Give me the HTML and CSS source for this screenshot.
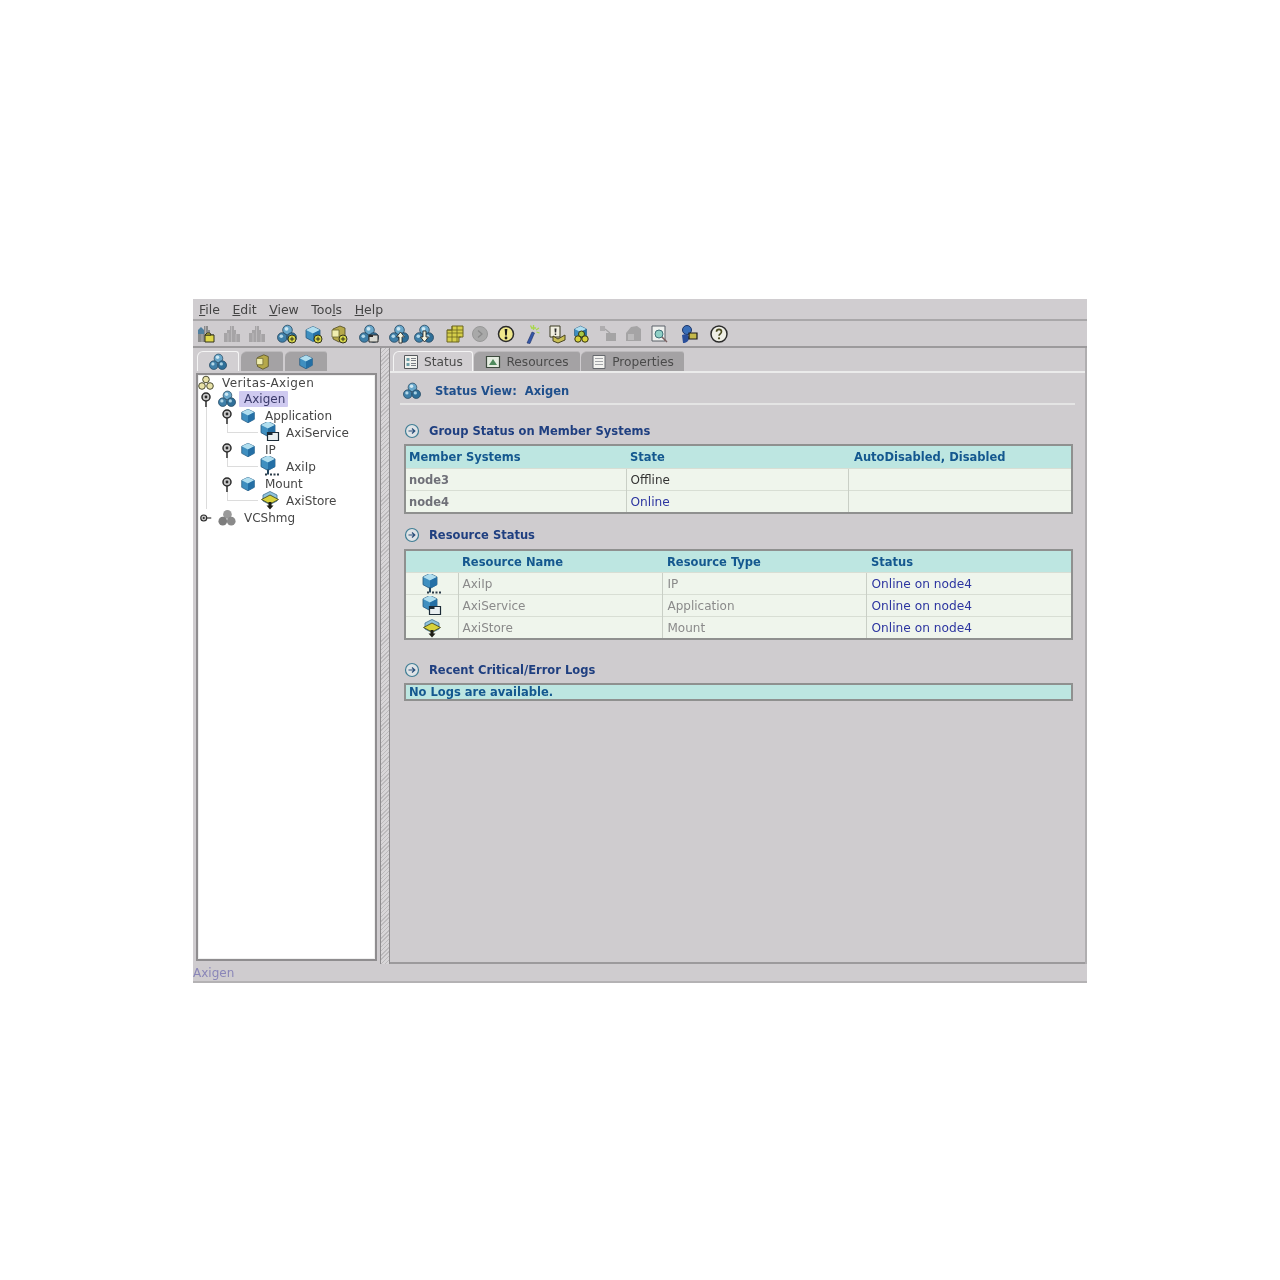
FILE: index.html
```html
<!DOCTYPE html>
<html lang="en">
<head>
  <meta charset="UTF-8" />
  <title>Veritas Cluster Manager</title>
  <link rel="stylesheet" href="styles.css">
</head>
<body>
  <svg class="defs" width="0" height="0">
    <defs>
      <symbol id="cube" viewBox="0 0 20 20">
        <path d="M10 2.500l7 3.400v7.800L10 17.500l-7-3.800V5.900z" fill="#3f8fc0" stroke="#24587f" stroke-width=".8"/>
        <path d="M10 2.500l7 3.400L10 9.500 3 5.900z" fill="#b0deef"/>
        <path d="M10 9.500v8l7-3.800V5.900z" fill="#246fa5"/>
      </symbol>
      <symbol id="cluster" viewBox="0 0 20 20">
        <g stroke="#24465f" stroke-width=".8">
          <circle cx="10.500" cy="6" r="4.800" fill="#6aa8cb"/>
          <circle cx="5.300" cy="13.500" r="4.800" fill="#3f7fa8"/>
          <circle cx="14.700" cy="13.500" r="4.800" fill="#2f6f98"/>
        </g>
        <circle cx="9.500" cy="4.800" r="1.900" fill="#cfe8f3"/>
        <circle cx="4.300" cy="12.200" r="1.800" fill="#b4d8e8"/>
        <circle cx="13.700" cy="12.200" r="1.800" fill="#a8d0e2"/>
      </symbol>
      <symbol id="cluster-off" viewBox="0 0 20 20">
        <circle cx="10.500" cy="6" r="4.800" fill="#9a9a9a"/>
        <circle cx="5.300" cy="13.500" r="4.800" fill="#7d7d7d"/>
        <circle cx="14.700" cy="13.500" r="4.800" fill="#8a8a8a"/>
      </symbol>
      <symbol id="towers" viewBox="0 0 20 20">
        <path d="M8 2h4v4h2v4h4v8H2V9h3V6h3z" fill="#8b8b8b"/>
        <path d="M9.500 2v16M6 9v9M14 10v8" stroke="#b5b3b5" stroke-width=".9"/>
      </symbol>
      <symbol id="res-ip" viewBox="0 0 20 20">
        <use href="#cube" x="-2" y="-3" width="20" height="20"/>
        <path d="M7 13.500h2v5H7z" fill="#24465f"/>
        <path d="M5 17.500h2v2H5zM10 17.500h2v2h-2zM13.500 17.500h2v2h-2zM17 17.500h2v2h-2z" fill="#2b3b48"/>
      </symbol>
      <symbol id="res-app" viewBox="0 0 20 20">
        <use href="#cube" x="-2" y="-3" width="20" height="20"/>
        <path d="M7.500 10.500h11v8h-11z" fill="#e8eef0" stroke="#1b2a36" stroke-width="1.200"/>
        <path d="M7.500 10.500h5v2.500h-5z" fill="#1b2a36"/>
      </symbol>
      <symbol id="res-mount" viewBox="0 0 20 20">
        <path d="M10 1.500l7 3.500v6l-7 3.500-7-3.500V5z" fill="#8fc3dc" stroke="#3f7092" stroke-width=".8"/>
        <path d="M1.500 9.500L10 5l8.500 4.500L10 14z" fill="#d8d23c" stroke="#3c3c10" stroke-width=".8"/>
        <path d="M8.500 12h3v3.500h2L10 19.500l-3.500-4h2z" fill="#1c1c14"/>
      </symbol>
      <symbol id="handle" viewBox="0 0 12 16">
        <circle cx="6" cy="5" r="4" fill="#c8c8c8" stroke="#2a2a2a" stroke-width="1.500"/>
        <circle cx="6" cy="5" r="1.400" fill="#2a2a2a"/>
        <path d="M6 9v6" stroke="#2a2a2a" stroke-width="1.500"/>
      </symbol>
      <symbol id="handle-side" viewBox="0 0 16 12">
        <circle cx="5" cy="6" r="4" fill="#c8c8c8" stroke="#2a2a2a" stroke-width="1.500"/>
        <circle cx="5" cy="6" r="1.400" fill="#2a2a2a"/>
        <path d="M9 6h6" stroke="#2a2a2a" stroke-width="1.500"/>
      </symbol>
      <symbol id="go" viewBox="0 0 16 16">
        <circle cx="8" cy="8" r="6.500" fill="#dfe3e6" stroke="#3f7d95" stroke-width="1.200"/>
        <path d="M4.500 8h6M8 5.500L10.800 8 8 10.500" fill="none" stroke="#2a4f7a" stroke-width="1.200"/>
      </symbol>
      <symbol id="plus-badge" viewBox="0 0 20 20">
        <circle cx="15" cy="15" r="4" fill="#d8d84a" stroke="#33331a"/>
        <path d="M12.800 15h4.400M15 12.800v4.400" stroke="#33331a"/>
      </symbol>
      <symbol id="doc-icon" viewBox="0 0 16 16">
        <path d="M1.500 1.500h13v13h-13z" fill="#f2f2ee" stroke="#55585c"/>
        <path d="M3.500 4h3v3h-3zM3.500 9h3v3h-3z" fill="#6f9fa8"/>
        <path d="M8 4.500h5M8 6.500h5M8 9.500h5M8 11.500h5" stroke="#7b7f85"/>
      </symbol>
      <symbol id="node-yellow" viewBox="0 0 20 20">
        <path d="M5 5l7-3 5 2v11l-6 3-6-3z" fill="#b5a84a" stroke="#4c4720" stroke-width=".8"/>
        <path d="M4 6h7v7H4z" fill="#f0eeb0" stroke="#6a6430" stroke-width=".8"/>
      </symbol>
    </defs>
  </svg>

  <div class="app">
    <nav class="menubar">
      <span class="menu"><u>F</u>ile</span>
      <span class="menu"><u>E</u>dit</span>
      <span class="menu"><u>V</u>iew</span>
      <span class="menu">Too<u>l</u>s</span>
      <span class="menu"><u>H</u>elp</span>
    </nav>

    <div class="toolbar">
      <span class="tool"><svg class="ico" viewBox="0 0 20 20"><use href="#towers" width="20" height="20"/><path d="M2 6l3-3 3 3v4H2z" fill="#4f7f9f"/><path d="M9 11h9v7H9z" fill="#e0d84a" stroke="#33331a"/><path d="M9 11l2-2h3l1 2z" fill="#e0d84a" stroke="#33331a"/></svg></span>
      <span class="tool"><svg class="ico faded"><use href="#towers"/></svg></span>
      <span class="tool"><svg class="ico faded"><use href="#towers"/></svg></span>
      <span class="tool sep"><svg class="ico"><use href="#cluster"/><use href="#plus-badge"/></svg></span>
      <span class="tool"><svg class="ico"><use href="#cube"/><use href="#plus-badge"/></svg></span>
      <span class="tool"><svg class="ico"><use href="#node-yellow"/><use href="#plus-badge"/></svg></span>
      <span class="tool sep"><svg class="ico" viewBox="0 0 20 20"><use href="#cluster" width="20" height="20"/><path d="M10 11h9v7h-9z" fill="#d9d9d2" stroke="#2b2b2b"/><path d="M10 11h4v2h-4z" fill="#2b2b2b"/></svg></span>
      <span class="tool sep"><svg class="ico" viewBox="0 0 20 20"><use href="#cluster" width="20" height="20"/><path d="M10 19v-6H7.500l4-5 4 5H13v6z" fill="#f4f4e0" stroke="#1b1b1b" stroke-width=".8"/></svg></span>
      <span class="tool"><svg class="ico" viewBox="0 0 20 20"><use href="#cluster" width="20" height="20"/><path d="M9 7v6H6.500l4 5 4-5H12V7z" fill="#f4f4e0" stroke="#1b1b1b" stroke-width=".8"/></svg></span>
      <span class="tool sep"><svg class="ico" viewBox="0 0 20 20"><path d="M2 6h5V2h11v11h-4v5H2z" fill="#d6cf4a" stroke="#6b6520"/><path d="M7 2v16M12 2v16M2 9h16M2 13h14M2 6h16" stroke="#6b6520" stroke-width=".8"/></svg></span>
      <span class="tool"><svg class="ico" viewBox="0 0 20 20"><circle cx="10" cy="10" r="7.500" fill="#a9a9a9" stroke="#989898"/><path d="M8 6.500l4 3.500-4 3.500" fill="none" stroke="#8a8a8a" stroke-width="1.300"/></svg></span>
      <span class="tool"><svg class="ico" viewBox="0 0 20 20"><circle cx="10" cy="10" r="7.500" fill="#f0e88c" stroke="#2a2a2a" stroke-width="1.500"/><path d="M8.700 5h2.600l-.5 6.500H9.200z" fill="#1a1a1a"/><circle cx="10" cy="14" r="1.400" fill="#1a1a1a"/></svg></span>
      <span class="tool"><svg class="ico" viewBox="0 0 20 20"><path d="M6 19l5-11 2.500 1L9 19.500z" fill="#3558a8" stroke="#1f2f66" stroke-width=".6"/><path d="M12.500 1v5M10 4h5M15 6l3-2M15.500 8l3 1M9.500 1.500l1.500 3" stroke="#a8d84a" stroke-width="1.300"/></svg></span>
      <span class="tool"><svg class="ico" viewBox="0 0 20 20"><path d="M3 2h10v11H3z" fill="#f0eee0" stroke="#3b3b22"/><path d="M7.500 4.500h2l-.3 4H7.800zM7.800 9.500h1.400v1.400H7.800z" fill="#2a2a2a"/><path d="M6 12l5 3 7-4v5l-7 3-5-2z" fill="#c9bf55" stroke="#4a4520"/></svg></span>
      <span class="tool"><svg class="ico" viewBox="0 0 20 20"><use href="#cube" width="17" height="17"/><circle cx="6" cy="15" r="3.200" fill="#d8d23c" stroke="#34340f"/><circle cx="13" cy="15" r="3.200" fill="#d8d23c" stroke="#34340f"/><circle cx="9.500" cy="10" r="3" fill="#a8c844" stroke="#34340f"/></svg></span>
      <span class="tool"><svg class="ico faded" viewBox="0 0 20 20"><path d="M2 2h5v5H2z" fill="#9a9a9a"/><path d="M8 9h10v8H8z" fill="#8a8a8a"/><path d="M7 5l5 4" stroke="#8a8a8a" stroke-width="1.500"/></svg></span>
      <span class="tool"><svg class="ico faded" viewBox="0 0 20 20"><path d="M8 3l6-1 4 3v12H3V9z" fill="#8a8a8a"/><path d="M5 10h6v6H5z" fill="#b0b0b0"/></svg></span>
      <span class="tool"><svg class="ico" viewBox="0 0 20 20"><path d="M3 2h13v15H3z" fill="#eef0ee" stroke="#5a6068"/><circle cx="10" cy="10" r="4" fill="#8fd0c6" stroke="#3f7078"/><path d="M13 13l5 5" stroke="#7a5f5f" stroke-width="1.500"/></svg></span>
      <span class="tool sep"><svg class="ico" viewBox="0 0 20 20"><circle cx="8" cy="6" r="4.500" fill="#3a6fb8" stroke="#1c3468"/><path d="M3 11c4-2 7 0 7 3s-3 5-6 5z" fill="#2a4f9a"/><path d="M10 9h8v6h-8z" fill="#c4b84a" stroke="#1a1a1a" stroke-width="1.200"/></svg></span>
      <span class="tool sep"><svg class="ico" viewBox="0 0 20 20"><circle cx="10" cy="10" r="8" fill="#efefe6" stroke="#2b2b2b" stroke-width="1.500"/><path d="M7.500 7.800c0-3.200 5-3.200 5 0 0 2-2.500 2-2.500 4" fill="none" stroke="#4a4a1e" stroke-width="1.600"/><circle cx="10" cy="14.300" r="1.100" fill="#4a4a1e"/></svg></span>
    </div>

    <div class="main">
      <aside class="side">
        <div class="tabs side-tabs">
          <span class="tab tab-on tab-side"><svg class="ico-sm"><use href="#cluster"/></svg></span>
          <span class="tab tab-side"><svg class="ico-sm"><use href="#node-yellow"/></svg></span>
          <span class="tab tab-side"><svg class="ico-sm"><use href="#cube"/></svg></span>
        </div>
        <div class="tree">
          <div class="row"><svg class="root-ico" viewBox="0 0 16 16"><g fill="#e8e2a8" stroke="#4a4a30"><circle cx="8" cy="4.500" r="3.300"/><circle cx="4" cy="11" r="3.300"/><circle cx="12" cy="11" r="3.300"/></g></svg><span class="label root-label">Veritas-Axigen</span></div>
          <div class="row"><svg class="handle"><use href="#handle"/></svg><svg class="ico-sm group-ico"><use href="#cluster"/></svg><span class="label label-sel">Axigen</span></div>
          <div class="row lvl2"><svg class="handle"><use href="#handle"/></svg><svg class="ico-sm group-ico"><use href="#cube"/></svg><span class="label">Application</span></div>
          <div class="row lvl3 branch"><svg class="ico-res"><use href="#res-app"/></svg><span class="label">AxiService</span></div>
          <div class="row lvl2"><svg class="handle"><use href="#handle"/></svg><svg class="ico-sm group-ico"><use href="#cube"/></svg><span class="label">IP</span></div>
          <div class="row lvl3 branch"><svg class="ico-res"><use href="#res-ip"/></svg><span class="label">AxiIp</span></div>
          <div class="row lvl2"><svg class="handle"><use href="#handle"/></svg><svg class="ico-sm group-ico"><use href="#cube"/></svg><span class="label">Mount</span></div>
          <div class="row lvl3 branch"><svg class="ico-res"><use href="#res-mount"/></svg><span class="label">AxiStore</span></div>
          <div class="row"><svg class="handle handle-side"><use href="#handle-side"/></svg><svg class="ico-sm group-ico"><use href="#cluster-off"/></svg><span class="label">VCShmg</span></div>
        </div>
      </aside>

      <div class="splitter"></div>

      <section class="content">
        <div class="tabs">
          <span class="tab tab-on tab-main"><svg class="ico-tab"><use href="#doc-icon"/></svg>Status</span>
          <span class="tab tab-main tab-res"><svg class="ico-tab" viewBox="0 0 16 16"><path d="M1.500 2.500h13v11h-13z" fill="#e4ece0" stroke="#3d4a3d" stroke-width="1.200"/><path d="M4 11l4-6 4 6z" fill="#4e8a5c"/></svg>Resources</span>
          <span class="tab tab-main"><svg class="ico-tab" viewBox="0 0 16 16"><path d="M2 1.500h12v13H2z" fill="#f3f3f0" stroke="#66696e"/><path d="M4 4.500h8M4 7.500h8M4 10.500h8" stroke="#a2a4a8"/></svg>Properties</span>
        </div>
        <div class="panel">
          <h1 class="view-title"><svg class="ico-sm"><use href="#cluster"/></svg><span>Status View:&nbsp; Axigen</span></h1>

          <h2 class="sec sec-first"><svg class="ico-go"><use href="#go"/></svg>Group Status on Member Systems</h2>
          <table class="grid grid-members">
            <colgroup><col class="c-m1"><col class="c-m2"><col></colgroup>
            <tr><th>Member Systems</th><th>State</th><th>AutoDisabled, Disabled</th></tr>
            <tr><td class="node">node3</td><td class="dark">Offline</td><td></td></tr>
            <tr><td class="node">node4</td><td class="link">Online</td><td></td></tr>
          </table>

          <h2 class="sec"><svg class="ico-go"><use href="#go"/></svg>Resource Status</h2>
          <table class="grid grid-res">
            <colgroup><col class="c-ico"><col class="c-b"><col class="c-b"><col></colgroup>
            <tr><th></th><th>Resource Name</th><th>Resource Type</th><th>Status</th></tr>
            <tr><td class="cell-ico"><svg class="ico-res"><use href="#res-ip"/></svg></td><td class="muted">AxiIp</td><td class="muted">IP</td><td class="link">Online on node4</td></tr>
            <tr><td class="cell-ico"><svg class="ico-res"><use href="#res-app"/></svg></td><td class="muted">AxiService</td><td class="muted">Application</td><td class="link">Online on node4</td></tr>
            <tr><td class="cell-ico"><svg class="ico-res"><use href="#res-mount"/></svg></td><td class="muted">AxiStore</td><td class="muted">Mount</td><td class="link">Online on node4</td></tr>
          </table>

          <h2 class="sec sec-logs"><svg class="ico-go"><use href="#go"/></svg>Recent Critical/Error Logs</h2>
          <div class="nologs">No Logs are available.</div>
        </div>
      </section>
    </div>

    <footer class="statusbar">Axigen</footer>
  </div>
</body>
</html>
```

FILE: styles.css
```css
body {
  margin: 0;
  background: #fff;
  padding: 299px 193px 0;
  font-family: "DejaVu Sans", sans-serif;
  font-size: 12px;
  color: #3a3a3a;
}
.defs {
  position: absolute;
}
.app {
  width: 894px;
  height: 684px;
  background: #cfcccf;
  display: flex;
  flex-direction: column;
  filter: blur(0.5px);
}
.menubar {
  height: 22px;
  box-sizing: border-box;
  border-bottom: 2px solid #a9a7a9;
  display: flex;
  align-items: center;
  padding: 1px 0 0 6px;
  gap: 12.500px;
  background: #d0cdd0;
  font-size: 12.500px;
  color: #444;
}
.toolbar {
  height: 27px;
  box-sizing: border-box;
  border-bottom: 2px solid #9c9a9c;
  display: flex;
  align-items: center;
  padding-left: 0.500px;
}
.tool {
  width: 25.500px;
  flex: none;
  display: flex;
  justify-content: center;
}
.sep {
  margin-left: 4.700px;
}
.ico {
  width: 20px;
  height: 20px;
}
.faded {
  opacity: 0.6;
}
.main {
  flex: 1;
  display: flex;
  min-height: 0;
}
.side {
  width: 188px;
  box-sizing: border-box;
  padding: 3px 3px 3px 3px;
  display: flex;
  flex-direction: column;
  border-right: 1px solid #8e8c8e;
}
.tabs {
  display: flex;
  height: 20px;
  padding-left: 3px;
}
.side-tabs {
  gap: 2px;
  padding-left: 1px;
}
.tab {
  display: flex;
  align-items: center;
  justify-content: center;
  box-sizing: border-box;
  background: #a4a2a4;
  border-radius: 6px 3px 0 0;
  border-top: 1px solid #bdbbbd;
}
.tab-on {
  background: #d2cfd2;
  border: 1px solid #f4f4f4;
  border-bottom: none;
}
.tab-side {
  width: 42px;
}
.tab-main {
  width: 103px;
  gap: 5px;
  margin-right: 1px;
  color: #4a4a4a;
  font-size: 12.200px;
}
.tab-main.tab-on {
  width: 80px;
}
.tab-res {
  width: 106px;
}
.ico-sm {
  width: 18px;
  height: 18px;
  flex: none;
}
.ico-tab {
  width: 16px;
  height: 16px;
}
.tree {
  flex: 1;
  background: #fff;
  border: 2px solid #8f8d8f;
  margin-top: 2px;
  outline: 1px solid #f0f0f0;
  outline-offset: -3px;
}
.row {
  height: 17px;
  display: flex;
  align-items: center;
  position: relative;
  padding-left: 2px;
  color: #464646;
}
.row:first-child {
  height: 15px;
}
.row svg {
  flex: none;
  position: relative;
  z-index: 1;
}
.root-ico {
  width: 16px;
  height: 16px;
  margin-left: -2px;
}
.handle {
  width: 12px;
  height: 16px;
}
.row .handle {
  margin-right: 6px;
  margin-top: 3px;
}
.row .handle-side {
  margin-top: 0;
}
.group-ico {
  margin-right: 2px;
}
.label {
  margin-left: 1px;
  padding: 0 3px 0 5px;
  font-size: 12px;
  line-height: 16px;
}
.root-label {
  margin-left: 3px;
  letter-spacing: 0.400px;
}
.label-sel {
  background: #cfcaf0;
  border-radius: 1px;
  color: #3a3a6a;
}
.lvl2 {
  padding-left: 23px;
}
.lvl3 {
  padding-left: 62px;
}
.lvl2::after,
.lvl3::after {
  content: "";
  position: absolute;
  left: 8px;
  top: 0;
  bottom: 0;
  border-left: 1px solid #dcdcdc;
}
.branch::before {
  content: "";
  position: absolute;
  left: 29px;
  top: 0;
  width: 30px;
  height: 8px;
  border-left: 1px solid #dcdcdc;
  border-bottom: 1px solid #dcdcdc;
}
.ico-res {
  width: 20px;
  height: 20px;
}
.row .ico-res {
  margin-top: -2px;
}
.splitter {
  width: 8px;
  background: repeating-linear-gradient(135deg, #bcbabc 0 1px, #d8d6d8 1px 3px);
}
.content {
  flex: 1;
  padding-top: 3px;
  display: flex;
  flex-direction: column;
  min-width: 0;
  border-left: 1px solid #8e8c8e;
  border-right: 2px solid #b0aeb0;
}
.panel {
  flex: 1;
  border-top: 2px solid #ebebeb;
  padding: 0 12px 0 14px;
  box-sizing: border-box;
  border-bottom: 2px solid #9c9a9c;
}
.view-title {
  margin: 0 -2px 0 -4px;
  height: 32px;
  display: flex;
  align-items: center;
  font-size: 11.500px;
  font-weight: bold;
  color: #1f4f8c;
  border-bottom: 2px solid #e4e4e4;
  padding: 5px 0 0 3px;
  box-sizing: border-box;
}
.view-title span {
  margin-left: 14px;
}
.sec {
  margin: 12px 0 5px;
  height: 18px;
  display: flex;
  align-items: center;
  font-size: 11.500px;
  font-weight: bold;
  color: #1f3f80;
  gap: 9px;
}
.sec-first {
  margin-top: 17px;
  margin-bottom: 4px;
}
.sec-logs {
  margin-top: 21px;
  margin-bottom: 4px;
}
.ico-go {
  width: 16px;
  height: 16px;
  flex: none;
}
.grid {
  width: 669px;
  table-layout: fixed;
  border-collapse: collapse;
  border: 2px solid #8f908f;
  background: #eff5ec;
}
.c-m1 {
  width: 221px;
}
.c-m2 {
  width: 222px;
}
.c-ico {
  width: 53px;
}
.c-b {
  width: 204px;
}
.grid th {
  height: 21px;
  padding: 0 4px;
  text-align: left;
  background: #bde6e1;
  color: #14588f;
  font-size: 11.500px;
  font-weight: bold;
}
.grid td {
  height: 21px;
  padding: 0 4px;
  border-left: 1px solid #c9cfc6;
  border-top: 1px solid #d8ded4;
  overflow: hidden;
  white-space: nowrap;
}
.grid td:first-child {
  border-left: none;
}
.grid-members th {
  height: 22px;
}
.grid-members th:first-child,
.grid-members td:first-child {
  padding-left: 3px;
}
.grid-members th:nth-child(3) {
  padding-left: 6px;
}
.grid-res th:nth-child(n+3),
.grid-res td:nth-child(n+3) {
  padding-left: 5px;
}
.node {
  font-weight: bold;
  color: #6f7078;
  font-size: 11.500px;
}
.dark {
  color: #333;
}
.link {
  color: #2c35a0;
  font-size: 12.200px;
}
.muted {
  color: #8a8a8a;
}
.cell-ico svg {
  display: block;
  margin: 0 auto;
}
.nologs {
  width: 669px;
  height: 18px;
  box-sizing: border-box;
  border: 2px solid #8f908f;
  background: #bde6e1;
  color: #14588f;
  font-weight: bold;
  font-size: 11.500px;
  padding-left: 3px;
  line-height: 14px;
}
.statusbar {
  height: 19px;
  line-height: 19px;
  color: #8a86b8;
  font-size: 12px;
  box-sizing: border-box;
  border-bottom: 2px solid #b4b2b4;
}
```
